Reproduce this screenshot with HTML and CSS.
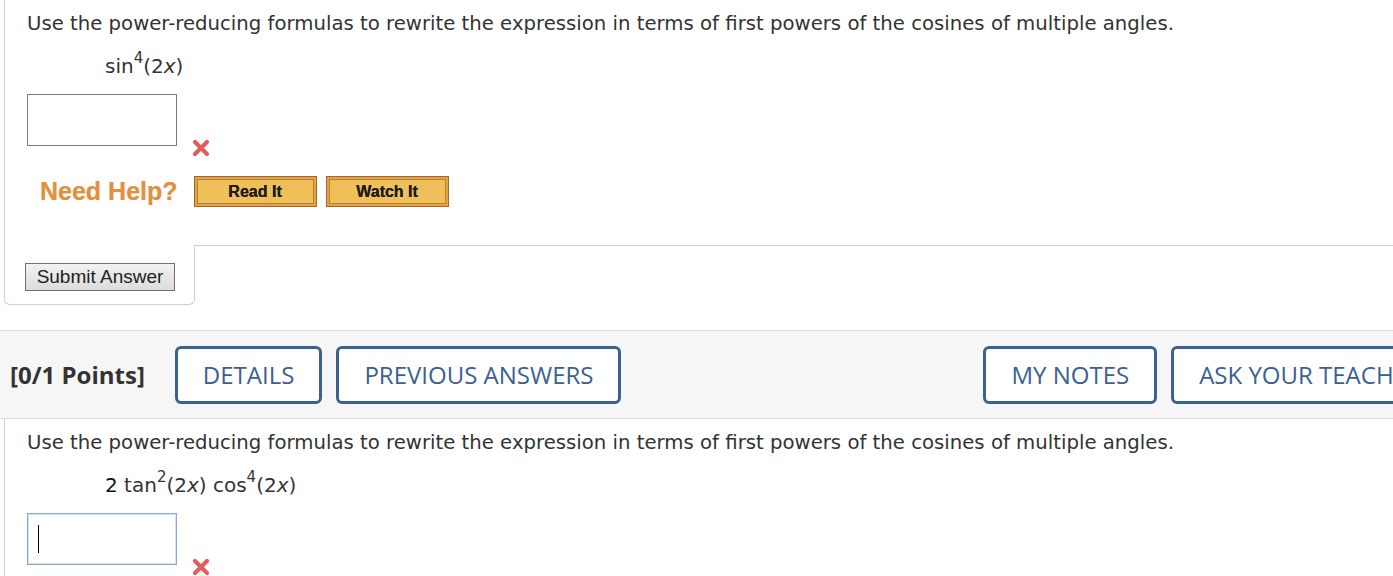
FILE: index.html
```html
<!DOCTYPE html>
<html>
<head>
<meta charset="utf-8">
<link rel="stylesheet" href="styles.css">
</head>
<body>
<div class="page">
  <div class="question q1">
    <p class="prompt">Use the power-reducing formulas to rewrite the expression in terms of first powers of the cosines of multiple angles.</p>
    <p class="expr">sin<sup>4</sup>(2<i>x</i>)</p>
    <div class="answer-row">
      <div class="answer-box"></div>
      <svg class="wrong" viewBox="0 0 20 20" width="20" height="20"><path d="M4 4 L16 16 M16 4 L4 16" stroke="#e25c5c" stroke-width="4.2" stroke-linecap="round"/></svg>
    </div>
    <div class="help-row">
      <span class="need-help">Need Help?</span>
      <span class="gold-btn">Read It</span>
      <span class="gold-btn">Watch It</span>
    </div>
  </div>
  <div class="footer">
    <div class="tab"><span class="submit-btn">Submit Answer</span></div>
    <div class="filler"></div>
  </div>

  <div class="header">
    <span class="points">[0/1 Points]</span>
    <span class="blue-btn">DETAILS</span>
    <span class="blue-btn">PREVIOUS ANSWERS</span>
    <span class="blue-btn right-start">MY NOTES</span>
    <span class="blue-btn">ASK YOUR TEACHER</span>
  </div>

  <div class="question q2">
    <p class="prompt">Use the power-reducing formulas to rewrite the expression in terms of first powers of the cosines of multiple angles.</p>
    <p class="expr"><span class="num">2</span> tan<sup>2</sup>(2<i>x</i>) cos<sup>4</sup>(2<i>x</i>)</p>
    <div class="answer-row">
      <div class="answer-box active"><span class="caret"></span></div>
      <svg class="wrong" viewBox="0 0 20 20" width="20" height="20"><path d="M4 4 L16 16 M16 4 L4 16" stroke="#e25c5c" stroke-width="4.2" stroke-linecap="round"/></svg>
    </div>
  </div>
</div>
</body>
</html>
```

FILE: styles.css
```css
html, body {
  margin: 0;
  padding: 0;
  background: #fff;
  overflow: hidden;
}
.page {
  width: 1393px;
  height: 576px;
  overflow: hidden;
  font-family: "DejaVu Sans", Verdana, sans-serif;
  color: #333;
}
.question {
  margin-left: 4px;
  border-left: 1px solid #cfcfcf;
  padding-left: 22px;
}
.q1 {
  padding-top: 12px;
  padding-bottom: 38px;
}
.prompt {
  margin: 0;
  font-size: 19.7px;
  line-height: 24px;
  white-space: nowrap;
}
.expr {
  margin: 18px 0 0 78px;
  font-size: 20px;
  line-height: 24px;
}
.expr sup {
  font-size: 15px;
  vertical-align: 0;
  position: relative;
  top: -10px;
  line-height: 0;
}
.expr i {
  font-style: italic;
}
.expr .num {
  color: #111;
}
.answer-row {
  display: flex;
  align-items: flex-end;
  margin-top: 16px;
  gap: 14px;
}
.answer-box {
  width: 148px;
  height: 50px;
  border: 1px solid #7a7a7a;
  background: #fff;
  position: relative;
}
.answer-box.active {
  border-color: #8aa6cc;
  box-shadow: inset 0 0 0 1px #d5e0f0;
}
.caret {
  position: absolute;
  left: 10px;
  top: 11px;
  width: 1px;
  height: 28px;
  background: #000;
}
.wrong {
  margin-bottom: -12px;
}
.help-row {
  display: flex;
  align-items: center;
  margin-top: 30px;
  margin-left: 13px;
}
.need-help {
  font-family: "Liberation Sans", Arial, sans-serif;
  font-weight: bold;
  font-size: 25px;
  color: #e0913f;
  margin-right: 16px;
  text-shadow: 0 0 1px rgba(224,145,63,0.5);
}
.gold-btn {
  display: inline-flex;
  align-items: center;
  justify-content: center;
  box-sizing: border-box;
  width: 123px;
  height: 31px;
  margin-right: 9px;
  border: 1px solid #9e6a2c;
  background: #efbf5a;
  box-shadow: inset 0 0 0 2px #e6a045, inset 0 0 0 3px #b98035;
  font-family: "Liberation Sans", Arial, sans-serif;
  font-weight: bold;
  font-size: 16px;
  color: #1d1d1d;
  text-shadow: 0 0 0.6px #1d1d1d;
}
.footer {
  display: flex;
  height: 60px;
}
.tab {
  width: 191px;
  margin-left: 4px;
  border-left: 1px solid #cfcfcf;
  border-right: 1px solid #cfcfcf;
  border-bottom: 1px solid #cfcfcf;
  border-radius: 0 0 6px 6px;
  padding: 18px 0 0 20px;
  box-sizing: border-box;
}
.filler {
  flex: 1;
  border-top: 1px solid #cfcfcf;
}
.submit-btn {
  display: inline-block;
  box-sizing: border-box;
  width: 150px;
  height: 28px;
  border: 1px solid #707070;
  background: linear-gradient(#f2f2f2, #dcdcdc);
  font-family: "Liberation Sans", Arial, sans-serif;
  font-size: 19px;
  line-height: 26px;
  text-align: center;
  color: #222;
}
.header {
  margin-top: 25px;
  width: 1500px;
  height: 89px;
  box-sizing: border-box;
  background: #f6f6f6;
  border-top: 1px solid #dcdcdc;
  border-bottom: 1px solid #dcdcdc;
  display: flex;
  align-items: center;
  padding-left: 10px;
  gap: 14px;
  font-family: "Open Sans", sans-serif;
}
.points {
  font-weight: bold;
  font-size: 24px;
  color: #333;
  margin-right: 16px;
  white-space: nowrap;
}
.blue-btn {
  display: inline-flex;
  align-items: center;
  box-sizing: border-box;
  height: 58px;
  padding: 0 25px;
  border: 3px solid #3a6190;
  border-radius: 6px;
  background: #fff;
  color: #3a6190;
  font-size: 24px;
  white-space: nowrap;
}
.right-start {
  margin-left: 348px;
}
.q2 {
  padding-top: 12px;
  height: 200px;
}
```
